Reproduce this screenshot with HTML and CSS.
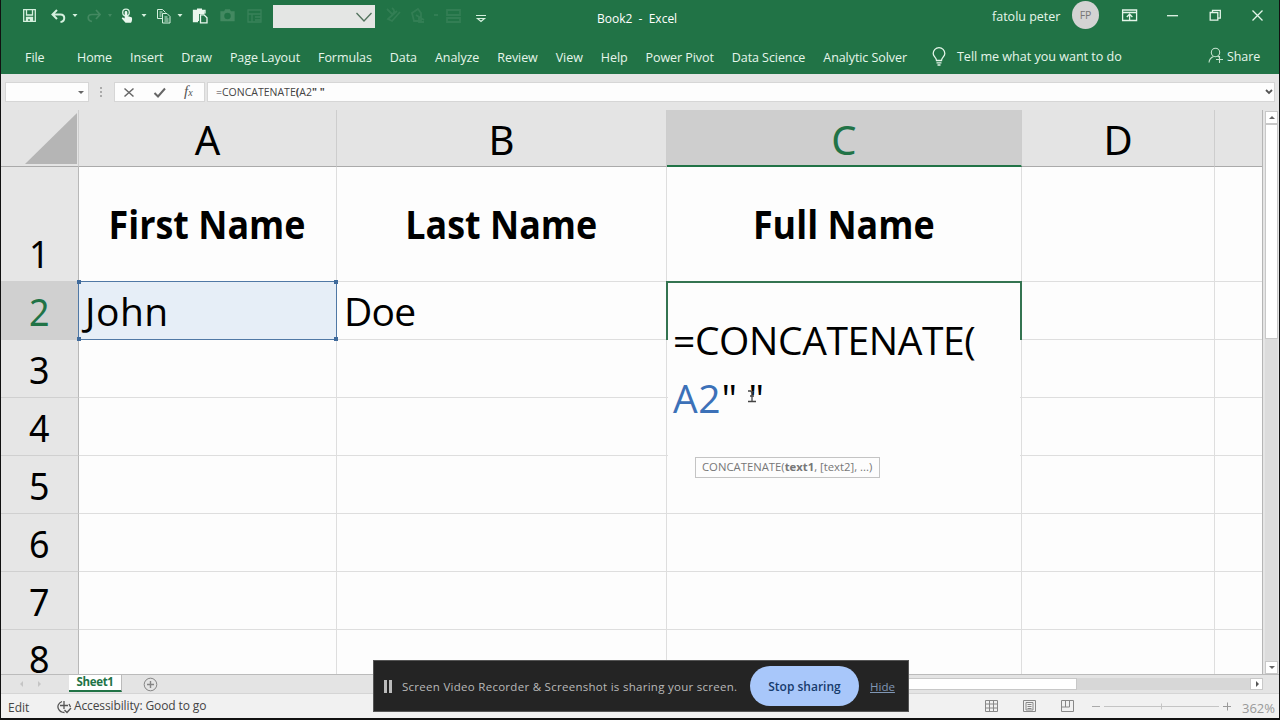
FILE: index.html
```html
<!DOCTYPE html>
<html lang="en">

<head>
    <meta charset="UTF-8">
    <meta name="viewport" content="width=device-width, initial-scale=1.0">
    <title>Book2 - Excel</title>
    <link rel="stylesheet" href="styles.css">
</head>

<body>
    <div class="window">
        <header class="ribbon">
            <div class="titlebar">
                <!-- quick access toolbar -->
                <svg class="quick" width="470" height="32" viewBox="0 0 470 32" fill="none" stroke="#d5f0de" stroke-width="1.3">
                    <path d="M23.7 9.7h11.6v11.6H23.7z M26.5 10v5h6v-5 M26.5 21v-3.500h6V21" />
                    <path d="M27 18h5v3h-5z" fill="#d5f0de" stroke="none" />
                    <path d="M29 19v2" stroke="#217346" />
                    <path d="M57 10l-4.500 4.500 4.500 4.500M53 14.500h7.500c5 0 5 7 0 7.500" stroke-width="2" />
                    <path d="M72.500 14h5l-2.500 3zM141.500 14h5l-2.500 3zM177.500 14h5l-2.500 3z" fill="#d5f0de" stroke="none" />
                    <g stroke="#438961">
                        <path d="M96 10l4 4.500-4 4.500M99 14.500h-7c-5 0-5 6 0 7" stroke-width="1.700" />
                        <path d="M108 14h4l-2 3z" fill="#438961" stroke="none" />
                    </g>
                    <circle cx="126" cy="12.500" r="3.300" />
                    <path d="M124.700 12c0-1.500 2.600-1.500 2.600 0v4l4.200 1.200c1 .5.700 4.300-.5 5.500h-5.500l-3.700-4.200c0-1.600 1.700-1 2.900.1z" fill="#e9f7ed" stroke="none" />
                    <path d="M162 18.500h-4.500v-9h5l3 3M162.500 13.500h4.500l3 3v6.500h-7.500z M159.500 12h3M159.500 14h2M159.500 16h2M164.500 17h3M164.500 19h4M164.500 21h4" stroke-width="1" />
                    <path d="M198 21.500h-4.500v-11H205v3" stroke="#e9f7ed" />
                    <path d="M194 11h10.500v3H199v7h-5zM197 8.500h5v3h-5z" fill="#e9f7ed" stroke="none" />
                    <path d="M200.500 14.800h3.500l3 3v5h-6.500z" fill="#217346" stroke="#e9f7ed" />
                    <g stroke="#438961">
                        <path d="M221 12h3.500l1-2h4l1 2h3.500v8.500h-13z" fill="#438961" />
                        <circle cx="227.500" cy="16" r="2.600" fill="#217346" stroke="#217346" />
                        <path d="M248 10h13v12h-13zM248 14h13M252 14v8M255 17h6M255 20h6" stroke-opacity=".7" />
                        <path d="M387 9l5 5M392 8c3 2 3 5 0 6M400 12l-8 9-4-2 9-8M412 13l6-4 3 4v8h-7zM416 15l8 5M419 17v5h5M434 15h4M447 10h13v5h-13zM447 18h13v4h-13z" stroke-opacity=".5" stroke-width="1.800" />
                    </g>
                    <path fill="#e4e6e4" stroke="none" d="M273 5h102v23H273z" />
                    <path d="M356.500 13l7.500 8 7.500-8" stroke="#52735d" />
                </svg>
                <svg class="more" width="14" height="32" viewBox="0 0 14 32" fill="none" stroke="#d5f0de" stroke-width="1.200">
                    <path d="M2 15.500h10M3.500 18.500l3.500 3 3.500-3z" />
                </svg>
                <span class="doc-name">Book2&nbsp; -&nbsp; Excel</span>
                <span class="user">fatolu peter</span>
                <span class="avatar">FP</span>
                <svg class="controls" width="150" height="32" viewBox="0 0 150 32" fill="none" stroke="#e4f5e9" stroke-width="1.300">
                    <path d="M2.600 10h14v10.500h-14zM3 12.500h13.500M9.600 20v-5.500M6.800 17l2.800-2.800 2.800 2.800" />
                    <path d="M47 15.700h11" />
                    <path d="M90.200 12.500h7.600v7.600h-7.600zM92.500 12.500v-2.200h7.800v7.800H98" />
                    <path d="M132.500 10.500l10 10M142.500 10.500l-10 10" />
                </svg>
            </div>
            <nav class="tabs">
                <span class="tab file">File</span>
                <span class="tab">Home</span>
                <span class="tab">Insert</span>
                <span class="tab">Draw</span>
                <span class="tab">Page Layout</span>
                <span class="tab">Formulas</span>
                <span class="tab">Data</span>
                <span class="tab">Analyze</span>
                <span class="tab">Review</span>
                <span class="tab">View</span>
                <span class="tab">Help</span>
                <span class="tab">Power Pivot</span>
                <span class="tab">Data Science</span>
                <span class="tab">Analytic Solver</span>
                <svg class="bulb" width="14" height="20" viewBox="0 0 14 20" fill="none" stroke="#e4f5e9" stroke-width="1.300">
                    <path d="M4.500 13.500c0-3-3.300-3.800-3.300-7a5.800 5.800 0 0 1 11.600 0c0 3.200-3.300 4-3.300 7zM4.500 15.800h5M5.500 18h3" />
                </svg>
                <span class="tell-me">Tell me what you want to do</span>
                <svg class="person" width="16" height="17" viewBox="0 0 16 17" fill="none" stroke="#c5e3cf" stroke-width="1.100">
                    <circle cx="7.500" cy="5.500" r="4.200" />
                    <path d="M1 15.500c.3-3.500 2-5 4.500-6M9.500 9l1.500 1M11.500 9v7M8 12.500h7" />
                </svg>
                <span class="share">Share</span>
            </nav>
        </header>

        <div class="formula-bar">
            <div class="name-box"><i class="arrow"></i></div>
            <div class="dots"><i></i><i></i><i></i></div>
            <div class="formula-tools">
                <svg width="90" height="19" viewBox="0 0 90 19" fill="none" stroke="#666" stroke-width="1.500">
                    <path d="M9.500 5.500l9 8M18.500 5.500l-9 8" />
                    <path d="M39.500 10l3.500 3.500 7-8" stroke-width="2" />
                </svg>
                <span class="fx">f<small>x</small></span>
            </div>
            <div class="formula"><span>=CONCATENATE<b>(</b>A2<b>" "</b></span>
                <svg width="8" height="6" viewBox="0 0 8 6"><path d="M1 1l3 3 3-3" fill="none" stroke="#555" stroke-width="1.800" /></svg>
            </div>
        </div>

        <main class="workbook">
            <div class="sheet">
                <div class="head corner"><svg width="52" height="51" viewBox="0 0 52 51"><path d="M52 0v51H0z" fill="#b5b5b5" /></svg></div>
                <div class="head">A</div>
                <div class="head">B</div>
                <div class="head active">C</div>
                <div class="head">D</div>
                <div class="head"></div>

                <div class="num first"><span>1</span></div>
                <div class="cell title"><span>First Name</span></div>
                <div class="cell title"><span>Last Name</span></div>
                <div class="cell title"><span>Full Name</span></div>
                <div class="cell"></div>
                <div class="cell"></div>

                <div class="num active"><span>2</span></div>
                <div class="cell picked"><span class="john">John</span><i></i><i></i><i></i><i></i></div>
                <div class="cell doe"><span>Doe</span></div>
                <div class="cell editing">
                    <div class="editor"><span class="line">=CONCATENATE(</span><span class="line second"><em>A2</em>" "</span></div>
                    <svg class="cursor" width="10" height="15" viewBox="0 0 10 15" fill="none" stroke="#444" stroke-width="1.300"><path d="M1 3h2.500L5 4.500V13M1 13.500h8M5 4.500L6.500 3M3 8h4" /></svg>
                    <div class="hint">CONCATENATE(<b>text1</b>, [text2], ...)</div>
                </div>
                <div class="cell"></div>
                <div class="cell"></div>

                <div class="num"><span>3</span></div><div class="cell"></div><div class="cell"></div><div class="cell"></div><div class="cell"></div><div class="cell"></div>
                <div class="num"><span>4</span></div><div class="cell"></div><div class="cell"></div><div class="cell"></div><div class="cell"></div><div class="cell"></div>
                <div class="num"><span>5</span></div><div class="cell"></div><div class="cell"></div><div class="cell"></div><div class="cell"></div><div class="cell"></div>
                <div class="num"><span>6</span></div><div class="cell"></div><div class="cell"></div><div class="cell"></div><div class="cell"></div><div class="cell"></div>
                <div class="num"><span>7</span></div><div class="cell"></div><div class="cell"></div><div class="cell"></div><div class="cell"></div><div class="cell"></div>
                <div class="num last"><span>8</span></div><div class="cell last"></div><div class="cell last"></div><div class="cell last"></div><div class="cell last"></div><div class="cell last"></div>
            </div>
            <div class="vscroll">
                <div class="btn"><i class="arrow up"></i></div>
                <div class="thumb"></div>
                <div class="btn bottom"><i class="arrow"></i></div>
            </div>
        </main>

        <div class="sheet-tabs">
            <div class="sheet-nav"><i></i><i></i></div>
            <div class="sheet-tab">Sheet1</div>
            <svg class="add" width="15" height="15" viewBox="0 0 15 15" fill="none" stroke="#858585"><circle cx="7.500" cy="7.500" r="6.300" /><path d="M4 7.500h7M7.500 4v7" stroke-width="1.400" /></svg>
            <div class="hscroll">
                <div class="hthumb"></div>
                <div class="hbtn"><i></i></div>
            </div>
        </div>

        <footer class="status">
            <span class="mode">Edit</span>
            <svg class="access" width="15" height="14" viewBox="0 0 15 14" fill="none" stroke="#555" stroke-width="1.300"><path d="M5 1.500C1.500 3 0 6 1.500 9s4 3.500 6 3.500M3 5.500h8M7 1v8M7.500 10l2.500 2.500L14 8M12 4l1.500 3" /></svg>
            <span class="good">Accessibility: Good to go</span>
            <svg class="views" width="250" height="16" viewBox="0 0 250 16" fill="none" stroke="#888">
                <path d="M1.500 2.500h12v11h-12zM5.500 2.500v11M9.500 2.500v11M1.500 6h12M1.500 10h12" />
                <path d="M39.500 2.500h12v11h-12zM42 4.500h7v7.500h-7zM43.500 6.500h4M43.500 8.500h4M43.500 10.500h4" />
                <path d="M77.500 2.500h12v11h-12zM81.500 2.500v6.500M85.500 2.500v6.500M77.500 9h8" />
                <path d="M108 8.500h8" stroke="#aaa" />
                <path d="M120 8.500h115M177.500 5.500v6" stroke="#c4c4c4" />
                <path d="M239 8.500h8M243.500 4.500v8" stroke="#999" />
            </svg>
            <span class="zoom">362%</span>
        </footer>

        <div class="share-bar">
            <div class="pause"></div>
            <span class="share-text">Screen Video Recorder &amp; Screenshot is sharing your screen.</span>
            <button class="stop">Stop sharing</button>
            <a class="hide">Hide</a>
        </div>
    </div>
</body>

</html>
```
FILE: styles.css
```css
* {
    box-sizing: border-box;
}

body {
    margin: 0;
    background-color: #111;
    font-family: "Open Sans", "Noto Sans", sans-serif;
}

.window {
    position: relative;
    display: flex;
    flex-direction: column;
    width: 1280px;
    height: 720px;
    padding: 0 1px 2px;
    overflow: hidden;
}

.window span {
    white-space: nowrap;
}

.ribbon,
.formula-bar,
.workbook,
.sheet-tabs {
    flex-shrink: 0;
}

.ribbon {
    height: 74px;
    background-color: #217346;
    color: #e6f6eb;
}

.titlebar {
    display: flex;
    height: 36px;
}

.quick {
    margin-left: -1px;
}

.more {
    margin: 0 0 0 4px;
}

.doc-name {
    width: 84px;
    margin: 10px 0 0 109px;
    font-size: 12px;
    font-weight: 500;
    color: #fff;
}

.user {
    width: 69px;
    margin: 8px 0 0 311px;
    font-size: 12.5px;
    font-weight: 500;
}

.avatar {
    width: 27px;
    height: 28px;
    margin: 1px 0 0 11px;
    border-radius: 50%;
    background-color: #d3d3d3;
    color: #777;
    font-size: 10.5px;
    line-height: 28px;
    text-align: center;
}

.controls {
    margin-left: 21px;
}

.tabs {
    display: flex;
    gap: 18px;
    height: 38px;
    padding-left: 24px;
    font-size: 12.5px;
    font-weight: 500;
    letter-spacing: -0.07px;
    line-height: 43px;
}

.file {
    margin-right: 14.5px;
}

.bulb {
    margin: 11px -7px 0 7px;
}

.tell-me {
    width: 165px;
    line-height: 41px;
    font-size: 12.6px;
    letter-spacing: -0.03px;
}

.person {
    margin: 11px -15px 0 68px;
}

.share {
    line-height: 41px;
}

.formula-bar {
    display: flex;
    height: 36px;
    padding: 8px 4px 0;
    background-color: #e5e5e5;
}

.name-box,
.formula-tools,
.formula {
    height: 20px;
    background-color: #fdfdfd;
    border: 1px solid #d6d6d6;
}

.name-box {
    display: flex;
    justify-content: flex-end;
    align-items: center;
    width: 84px;
    padding-right: 4px;
}

.arrow {
    border: 3px solid transparent;
    border-top: 3px solid #666;
    border-bottom: 0;
}

.up {
    border-top: 0;
    border-bottom: 3px solid #666;
}

.dots {
    display: flex;
    flex-direction: column;
    gap: 2px;
    width: 25px;
    padding: 5px 11px;
}

.dots i {
    width: 2px;
    height: 2px;
    background-color: #aaa;
}

.formula-tools {
    display: flex;
    width: 91px;
}

.fx {
    margin: -2px 0 0 -21px;
    color: #555;
    font: italic 15px "Liberation Serif", serif;
    line-height: 20px;
}

.fx small {
    font-size: 10px;
}

.formula {
    display: flex;
    justify-content: space-between;
    align-items: center;
    flex: 1;
    margin-left: 2px;
    padding: 0 1px 0 8px;
    color: #444;
    font-size: 10.5px;
}

.workbook {
    display: flex;
    height: 564px;
    background-color: #e5e5e5;
}

.sheet {
    display: grid;
    grid-template-columns: 78px 258px 330px 355px 193px 48px;
    grid-template-rows: 57px 115px repeat(6, 58px) 44px;
    width: 1263px;
    height: 564px;
    margin-left: -1px;
    overflow: hidden;
    border-left: 1px solid #111;
    border-right: 1px solid #b5b5b5;
}

.head {
    background-color: #e4e4e4;
    border-right: 1px solid #cdcdcd;
    border-bottom: 1px solid #aaa;
    font-size: 40px;
    line-height: 59px;
    text-align: center;
    font-family: "Noto Sans", sans-serif;
}

.corner {
    padding: 3px 1px 0 0;
    line-height: 0;
    text-align: right;
}

.head.active {
    background-color: #cecece;
    border-bottom: 2px solid #217346;
    color: #217346;
}

.num {
    background-color: #e6e6e6;
    border-right: 1px solid #b8b8b8;
    border-bottom: 1px solid #d0d0d0;
    font-size: 39px;
    line-height: 57px;
    text-align: center;
    font-family: "Noto Sans", sans-serif;
}

.num span {
    display: inline-block;
    transform: scaleX(0.92);
}

.first {
    padding-top: 57px;
}

.num.last {
    line-height: 56px;
}

.num.active {
    background-color: #d0d0d0;
    border-right-color: #217346;
    color: #217346;
}

.cell {
    background-color: #fdfdfd;
    border-right: 1px solid #dedede;
    border-bottom: 1px solid #dedede;
    font-size: 39px;
    line-height: 57px;
}

.last {
    border-bottom: 0;
}

.title {
    font-weight: bold;
    line-height: 114px;
    text-align: center;
}

.title span {
    display: inline-block;
    transform: scaleX(0.92);
}

.picked {
    position: relative;
    z-index: 1;
    margin: -1px 0 0 -1px;
    padding-left: 6px;
    background-color: #e6eef7;
    border: 1px solid #5078a5;
}

.john {
    letter-spacing: 0.5px;
}

.picked i {
    position: absolute;
    right: -2px;
    bottom: -2px;
    width: 4px;
    height: 4px;
    background-color: #406b9c;
}

.picked i:nth-of-type(1),
.picked i:nth-of-type(2) {
    top: -2px;
}

.picked i:nth-of-type(1),
.picked i:nth-of-type(3) {
    left: -2px;
}

.doe {
    padding-left: 7px;
    letter-spacing: -0.8px;
}

.editing {
    position: relative;
    margin: -1px 0 0 -1px;
    border: 2px solid #347451;
    border-bottom: 0;
}

/* the edited text runs over the rows below */
.editor {
    position: absolute;
    top: 28px;
    left: 0;
    width: 352px;
    height: 145px;
    padding-left: 5px;
    background-color: #fdfdfd;
}

.line {
    display: block;
    letter-spacing: -0.4px;
}

.second {
    padding-top: 1px;
    letter-spacing: 0.7px;
}

.editor em {
    color: #3c71b8;
    font-style: normal;
}

.cursor {
    position: absolute;
    top: 105px;
    left: 79px;
}

.hint {
    position: absolute;
    top: 174px;
    left: 27px;
    width: 185px;
    height: 21px;
    padding-left: 6px;
    background-color: #fdfdfd;
    border: 1px solid #c4c4c4;
    color: #777;
    font-size: 11.3px;
    line-height: 18px;
    white-space: nowrap;
}

.vscroll {
    display: flex;
    flex-direction: column;
    width: 13px;
    margin: 1px 0 0 2px;
    background-color: #dcdcdc;
}

.btn {
    display: flex;
    justify-content: center;
    align-items: center;
    height: 13px;
    background-color: #fff;
    border: 1px solid #c8c8c8;
}

.thumb {
    height: 215px;
    background-color: #fff;
    border: 1px solid #c8c8c8;
}

.bottom {
    margin-top: auto;
}

.sheet-tabs {
    display: flex;
    height: 20px;
    background-color: #e4e4e4;
    border-top: 1px solid #bbb;
    border-bottom: 1px solid #d5d5d5;
}

.sheet-nav {
    display: flex;
    gap: 15px;
    width: 68px;
    padding: 6px 0 0 19px;
}

.sheet-nav i {
    height: 0;
    border: 3px solid transparent;
    border-left: 0;
    border-right: 3px solid #c5c5c5;
}

.sheet-nav i + i {
    border-left: 3px solid #c5c5c5;
    border-right: 0;
}

.sheet-tab {
    width: 53px;
    height: 17px;
    background-color: #fff;
    border-bottom: 2px solid #217346;
    border-right: 1px solid #bbb;
    color: #217346;
    font-size: 11.5px;
    font-weight: bold;
    letter-spacing: -0.3px;
    line-height: 14px;
    text-align: center;
}

.add {
    margin: 2px 0 0 21px;
}

.hscroll {
    display: flex;
    justify-content: space-between;
    width: 363px;
    height: 12px;
    margin: 3px 16px 0 auto;
    background-color: #d7d7d7;
}

.hthumb {
    width: 177px;
    background-color: #fff;
    border: 1px solid #c8c8c8;
}

.hbtn {
    width: 13px;
    padding: 2px 0 0 5px;
    background-color: #fff;
    border: 1px solid #c8c8c8;
}

.hbtn i {
    display: block;
    width: 0;
    border: 3px solid transparent;
    border-left: 3px solid #555;
    border-right: 0;
}

.status {
    display: flex;
    height: 24px;
    background-color: #f1f1f1;
    color: #444;
    font-size: 12px;
    line-height: 24px;
}

.mode {
    width: 50px;
    padding: 2px 0 0 7px;
}

.access {
    margin: 6px 2px 0 6px;
}

.good {
    letter-spacing: -0.12px;
}

.views {
    margin: 4px 8px 0 auto;
}

.zoom {
    width: 37px;
    margin-top: 2px;
    color: #999;
    font-size: 13px;
}

.share-bar {
    position: absolute;
    top: 660px;
    left: 373px;
    display: flex;
    align-items: center;
    width: 536px;
    height: 52px;
    background-color: #242424;
    border: 1px solid #555;
    color: #b9b9b9;
    font-size: 11.5px;
}

.pause {
    width: 8px;
    height: 13px;
    margin-left: 10px;
    border: solid #bbb;
    border-width: 0 3px;
}

.share-text {
    width: 338px;
    margin-left: 10px;
    letter-spacing: 0.28px;
}

.stop {
    width: 109px;
    height: 40px;
    margin-left: 10px;
    padding: 0;
    background-color: #a8c7fa;
    border: 0;
    border-radius: 20px;
    color: #173b6c;
    font: 600 12px "Open Sans", sans-serif;
}

.hide {
    margin-left: 11px;
    color: #8097b5;
    text-decoration: underline;
}
```
